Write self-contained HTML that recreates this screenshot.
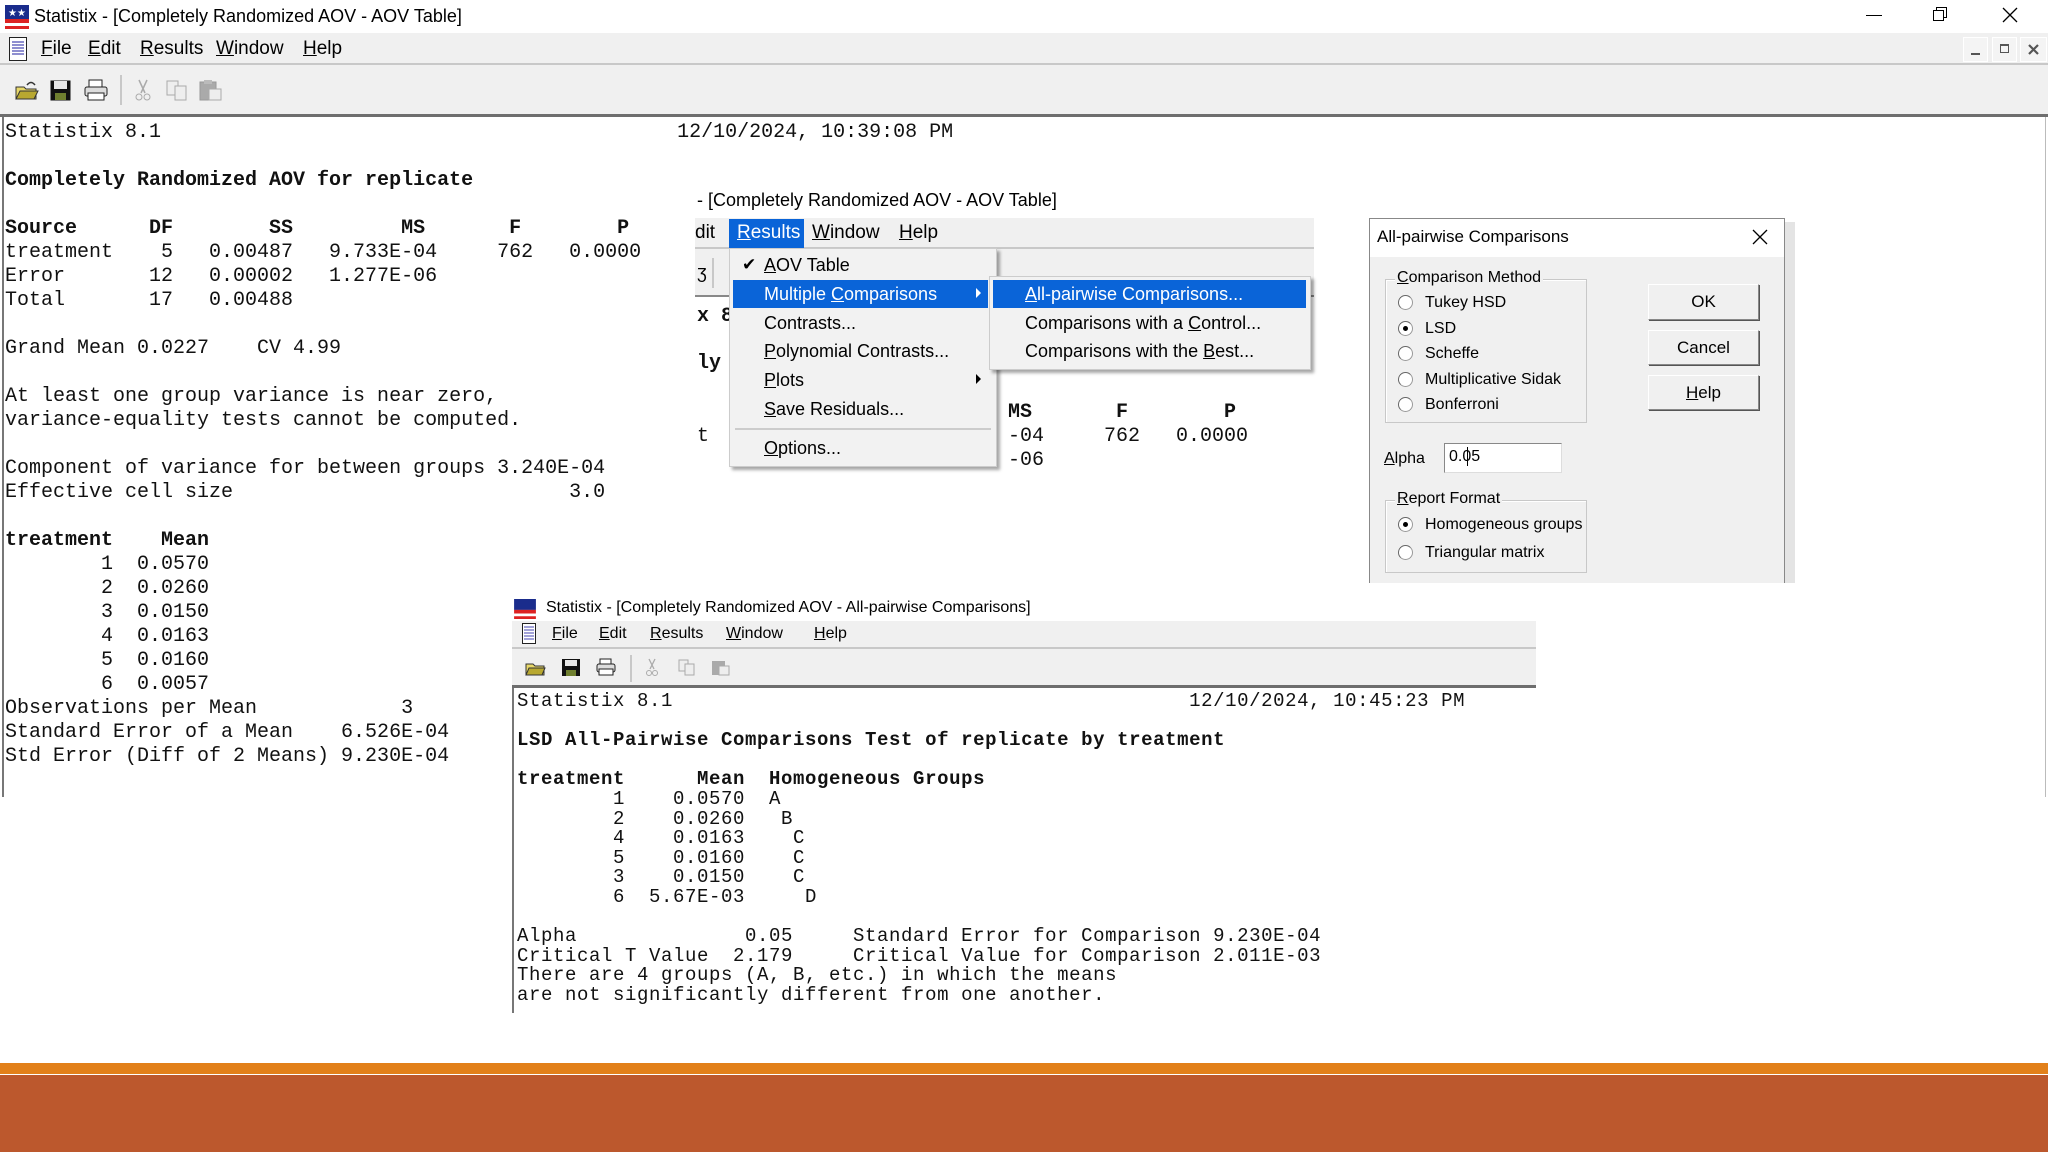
<!DOCTYPE html>
<html><head><meta charset="utf-8"><style>
*{margin:0;padding:0;box-sizing:border-box}
body{width:2048px;height:1152px;position:relative;overflow:hidden;background:#fff;font-family:"Liberation Sans",sans-serif;color:#000}
.a{position:absolute}
.mono{font-family:"Liberation Mono",monospace;white-space:pre;font-size:20px;line-height:24px;color:#111}
.ui{font-family:"Liberation Sans",sans-serif;white-space:nowrap}
b{font-weight:bold}
.gray{background:#f0f0f0}
.mi{position:absolute;font-size:18px;line-height:28px;white-space:nowrap}
.radio{position:absolute;width:15px;height:15px;border-radius:50%;border:1px solid #9a9a9a;border-left-color:#666;border-top-color:#666;background:#fff}
.radio.on::after{content:"";position:absolute;left:4px;top:4px;width:5px;height:5px;border-radius:50%;background:#000}
.rl{position:absolute;font-size:16px;line-height:20px;white-space:nowrap}
.btn{position:absolute;background:#f0f0f0;border:1px solid #fff;border-right-color:#888;border-bottom-color:#888;box-shadow:1px 1px 0 #555;font-size:17px;text-align:center}
.grp{position:absolute;border:1px solid #c8c8c8;box-shadow:1px 1px 0 #fff inset}
</style></head><body>

<svg class="a" style="left:5px;top:5px" width="24" height="24" viewBox="0 0 24 24"><rect x="0" y="0" width="24" height="14" fill="#1a2c8c"/><path d="M0 14h24v4H0z" fill="#d22"/><path d="M0 18h24v3H0z" fill="#fff"/><path d="M0 21h24v3H0z" fill="#d22"/><text x="3" y="11" font-size="10" fill="#fff" font-family="Liberation Sans">★★</text></svg>
<div class="a ui" style="left:34px;top:6px;font-size:18px">Statistix - [Completely Randomized AOV - AOV Table]</div>
<div class="a" style="left:1866px;top:15px;width:16px;height:1px;background:#000"></div>
<div class="a" style="left:1936px;top:7px;width:11px;height:11px;border:1px solid #000"></div>
<div class="a" style="left:1933px;top:10px;width:11px;height:11px;border:1px solid #000;background:#fff"></div>
<svg class="a" style="left:2002px;top:7px" width="16" height="16"><path d="M1 1L15 15M15 1L1 15" stroke="#000" stroke-width="1.3"/></svg>

<div class="a gray" style="left:0;top:33px;width:2048px;height:31px"></div>
<div class="a" style="left:0;top:63px;width:2048px;height:2px;background:#c8c8c8"></div>
<svg class="a" style="left:9px;top:37px" width="18" height="24"><rect x="0.5" y="0.5" width="17" height="23" fill="#fff" stroke="#222"/><path d="M3 5h12M3 8h12M3 11h12M3 14h12M3 17h12" stroke="#6a6ac0" stroke-width="1.5"/></svg>
<div class="a ui" style="left:41px;top:38px;font-size:19px"><u>F</u>ile</div>
<div class="a ui" style="left:88px;top:38px;font-size:19px"><u>E</u>dit</div>
<div class="a ui" style="left:140px;top:38px;font-size:19px"><u>R</u>esults</div>
<div class="a ui" style="left:216px;top:38px;font-size:19px"><u>W</u>indow</div>
<div class="a ui" style="left:303px;top:38px;font-size:19px"><u>H</u>elp</div>
<div class="a" style="left:1963px;top:37px;width:25px;height:25px;border:1px solid #fff;background:#f4f4f4"></div>
<div class="a" style="left:1971px;top:53px;width:9px;height:2px;background:#555"></div>
<div class="a" style="left:1992px;top:37px;width:25px;height:25px;border:1px solid #fff;background:#f4f4f4"></div>
<div class="a" style="left:2000px;top:44px;width:9px;height:9px;border:1px solid #555;border-top-width:2px"></div>
<div class="a" style="left:2020px;top:37px;width:27px;height:25px;border:1px solid #fff;background:#f4f4f4"></div>
<svg class="a" style="left:2028px;top:44px" width="11" height="11"><path d="M1 1L10 10M10 1L1 10" stroke="#555" stroke-width="2.2"/></svg>

<div class="a gray" style="left:0;top:65px;width:2048px;height:49px"></div>
<svg class="a" style="left:15px;top:79px" width="24" height="22"><path d="M1 8h8l2 2h10v10H1z" fill="#e8d86a" stroke="#333"/><path d="M1 20l4-8h18l-4 8z" fill="#b8a830" stroke="#333"/><path d="M12 6q4-5 8 0" fill="none" stroke="#333" stroke-width="1.5"/></svg>
<svg class="a" style="left:50px;top:80px" width="21" height="21"><rect x="0.5" y="0.5" width="20" height="20" fill="#111"/><rect x="4" y="1" width="13" height="8" fill="#e8e8e8"/><rect x="5" y="13" width="11" height="7" fill="#6f7f2f"/></svg>
<svg class="a" style="left:84px;top:79px" width="24" height="22"><rect x="5" y="1" width="13" height="8" fill="#fff" stroke="#222"/><rect x="1" y="8" width="22" height="9" rx="2" fill="#ddd" stroke="#222"/><rect x="4" y="14" width="16" height="7" fill="#fff" stroke="#222"/></svg>
<div class="a" style="left:120px;top:75px;width:2px;height:30px;background:#c8c8c8"></div>
<svg class="a" style="left:134px;top:79px" width="18" height="22"><path d="M5 1L11 14M13 1L7 14" stroke="#aaa" stroke-width="1.5"/><circle cx="5" cy="18" r="3" fill="none" stroke="#aaa"/><circle cx="13" cy="18" r="3" fill="none" stroke="#aaa"/></svg>
<svg class="a" style="left:166px;top:80px" width="22" height="21"><rect x="1" y="1" width="11" height="14" fill="#eee" stroke="#aaa"/><rect x="9" y="6" width="11" height="14" fill="#eee" stroke="#aaa"/></svg>
<svg class="a" style="left:199px;top:79px" width="24" height="22"><rect x="1" y="3" width="16" height="18" fill="#aaa" stroke="#999"/><rect x="5" y="1" width="8" height="4" fill="#bbb"/><rect x="10" y="10" width="12" height="11" fill="#eee" stroke="#aaa"/></svg>
<div class="a" style="left:0;top:114px;width:2048px;height:3px;background:#6e6e6e"></div>
<div class="a" style="left:2045px;top:117px;width:1px;height:680px;background:#bbb"></div>
<div class="a" style="left:2px;top:117px;width:2px;height:680px;background:#777"></div>

<div class="a mono" style="left:5px;top:121px">Statistix 8.1                                           12/10/2024, 10:39:08 PM

<b>Completely Randomized AOV for replicate</b>

<b>Source      DF        SS         MS       F        P</b>
treatment    5   0.00487   9.733E-04     762   0.0000
Error       12   0.00002   1.277E-06
Total       17   0.00488

Grand Mean 0.0227    CV 4.99

At least one group variance is near zero,
variance-equality tests cannot be computed.

Component of variance for between groups 3.240E-04
Effective cell size                            3.0

<b>treatment    Mean</b>
        1  0.0570
        2  0.0260
        3  0.0150
        4  0.0163
        5  0.0160
        6  0.0057
Observations per Mean            3
Standard Error of a Mean    6.526E-04
Std Error (Diff of 2 Means) 9.230E-04</div>

<div class="a" style="left:695px;top:186px;width:620px;height:290px;background:#fff"></div>
<div class="a ui" style="left:697px;top:190px;font-size:18px">- [Completely Randomized AOV - AOV Table]</div>
<div class="a gray" style="left:695px;top:218px;width:619px;height:30px"></div>
<div class="a" style="left:695px;top:247px;width:619px;height:2px;background:#c8c8c8"></div>
<div class="a gray" style="left:695px;top:249px;width:619px;height:46px"></div>
<div class="a" style="left:695px;top:295px;width:619px;height:2px;background:#888"></div>
<div class="a ui" style="left:695px;top:222px;font-size:19px">dit</div>
<div class="a" style="left:729px;top:219px;width:75px;height:29px;background:#0a64d8"></div>
<div class="a ui" style="left:737px;top:222px;font-size:19px;color:#fff"><u>R</u>esults</div>
<div class="a ui" style="left:812px;top:222px;font-size:19px"><u>W</u>indow</div>
<div class="a ui" style="left:899px;top:222px;font-size:19px"><u>H</u>elp</div>
<div class="a ui" style="left:697px;top:262px;font-size:18px">ʒ</div>
<div class="a" style="left:712px;top:258px;width:2px;height:30px;background:#c8c8c8"></div>
<div class="a mono" style="left:697px;top:305px;font-weight:bold">x 8</div>
<div class="a mono" style="left:697px;top:352px;font-weight:bold">ly</div>
<div class="a mono" style="left:697px;top:425px">t</div>
<div class="a mono" style="left:1008px;top:401px"><b>MS       F        P</b>
-04     762   0.0000
-06</div>

<div class="a" style="left:729px;top:248px;width:268px;height:219px;background:#f2f2f2;border:1px solid #ccc;box-shadow:3px 3px 3px rgba(0,0,0,.35)"></div>
<div class="mi" style="left:742px;top:251px;font-size:17px">✔</div>
<div class="mi" style="left:764px;top:251px"><u>A</u>OV Table</div>
<div class="a" style="left:733px;top:280px;width:255px;height:28px;background:#0a64d8"></div>
<div class="mi" style="left:764px;top:280px;color:#fff">Multiple <u>C</u>omparisons</div>
<div class="a" style="left:976px;top:288px;width:0;height:0;border-left:5px solid #fff;border-top:5px solid transparent;border-bottom:5px solid transparent"></div>
<div class="mi" style="left:764px;top:309px">Contrasts...</div>
<div class="mi" style="left:764px;top:337px"><u>P</u>olynomial Contrasts...</div>
<div class="mi" style="left:764px;top:366px"><u>P</u>lots</div>
<div class="a" style="left:976px;top:374px;width:0;height:0;border-left:5px solid #000;border-top:5px solid transparent;border-bottom:5px solid transparent"></div>
<div class="mi" style="left:764px;top:395px"><u>S</u>ave Residuals...</div>
<div class="a" style="left:735px;top:428px;width:256px;height:2px;background:#ccc"></div>
<div class="mi" style="left:764px;top:434px"><u>O</u>ptions...</div>

<div class="a" style="left:989px;top:276px;width:322px;height:94px;background:#f2f2f2;border:1px solid #ccc;box-shadow:3px 3px 3px rgba(0,0,0,.35)"></div>
<div class="a" style="left:993px;top:280px;width:313px;height:28px;background:#0a64d8"></div>
<div class="mi" style="left:1025px;top:280px;color:#fff"><u>A</u>ll-pairwise Comparisons...</div>
<div class="mi" style="left:1025px;top:309px">Comparisons with a <u>C</u>ontrol...</div>
<div class="mi" style="left:1025px;top:337px">Comparisons with the <u>B</u>est...</div>

<div class="a" style="left:1369px;top:218px;width:416px;height:365px;background:#f0f0f0;border:1px solid #888;border-bottom:none"></div>
<div class="a" style="left:1785px;top:222px;width:10px;height:361px;background:#e4e4e4"></div>
<div class="a" style="left:1370px;top:219px;width:414px;height:38px;background:#fff"></div>
<div class="a ui" style="left:1377px;top:227px;font-size:17px">All-pairwise Comparisons</div>
<svg class="a" style="left:1752px;top:229px" width="16" height="16"><path d="M1 1L15 15M15 1L1 15" stroke="#000" stroke-width="1.3"/></svg>
<div class="grp" style="left:1385px;top:279px;width:202px;height:144px"></div>
<div class="a ui gray" style="left:1395px;top:269px;font-size:16px;padding:0 2px"><u>C</u>omparison Method</div>
<div class="radio" style="left:1398px;top:295px"></div><div class="rl" style="left:1425px;top:293px">Tukey HSD</div>
<div class="radio on" style="left:1398px;top:321px"></div><div class="rl" style="left:1425px;top:319px">LSD</div>
<div class="radio" style="left:1398px;top:346px"></div><div class="rl" style="left:1425px;top:344px">Scheffe</div>
<div class="radio" style="left:1398px;top:372px"></div><div class="rl" style="left:1425px;top:370px">Multiplicative Sidak</div>
<div class="radio" style="left:1398px;top:397px"></div><div class="rl" style="left:1425px;top:395px">Bonferroni</div>
<div class="btn" style="left:1648px;top:284px;width:111px;height:36px;line-height:34px">OK</div>
<div class="btn" style="left:1648px;top:330px;width:111px;height:35px;line-height:33px">Cancel</div>
<div class="btn" style="left:1648px;top:375px;width:111px;height:35px;line-height:33px"><u>H</u>elp</div>
<div class="rl" style="left:1384px;top:449px"><u>A</u>lpha</div>
<div class="a" style="left:1444px;top:443px;width:118px;height:30px;background:#fff;border:1px solid #888;border-right-color:#ddd;border-bottom-color:#ddd"></div>
<div class="rl" style="left:1449px;top:447px">0.05</div>
<div class="a" style="left:1467px;top:447px;width:1px;height:19px;background:#000"></div>
<div class="grp" style="left:1385px;top:500px;width:202px;height:73px"></div>
<div class="a ui gray" style="left:1395px;top:490px;font-size:16px;padding:0 2px"><u>R</u>eport Format</div>
<div class="radio on" style="left:1398px;top:517px"></div><div class="rl" style="left:1425px;top:515px">Homogeneous groups</div>
<div class="radio" style="left:1398px;top:545px"></div><div class="rl" style="left:1425px;top:543px">Triangular matrix</div>

<div class="a" style="left:512px;top:595px;width:1024px;height:420px;background:#fff"></div>
<svg class="a" style="left:514px;top:599px" width="22" height="20" viewBox="0 0 24 22"><rect x="0" y="0" width="24" height="12" fill="#1a2c8c"/><path d="M0 12h24v4H0z" fill="#d22"/><path d="M0 16h24v3H0z" fill="#fff"/><path d="M0 19h24v3H0z" fill="#d22"/></svg>
<div class="a ui" style="left:546px;top:599px;font-size:16px">Statistix - [Completely Randomized AOV - All-pairwise Comparisons]</div>
<div class="a gray" style="left:512px;top:621px;width:1024px;height:26px"></div>
<div class="a" style="left:512px;top:647px;width:1024px;height:2px;background:#c8c8c8"></div>
<svg class="a" style="left:522px;top:623px" width="14" height="21"><rect x="0.5" y="0.5" width="13" height="20" fill="#fff" stroke="#222"/><path d="M2 4h10M2 7h10M2 10h10M2 13h10M2 16h10" stroke="#6a6ac0" stroke-width="1.3"/></svg>
<div class="a ui" style="left:552px;top:625px;font-size:16px"><u>F</u>ile</div>
<div class="a ui" style="left:599px;top:625px;font-size:16px"><u>E</u>dit</div>
<div class="a ui" style="left:650px;top:625px;font-size:16px"><u>R</u>esults</div>
<div class="a ui" style="left:726px;top:625px;font-size:16px"><u>W</u>indow</div>
<div class="a ui" style="left:814px;top:625px;font-size:16px"><u>H</u>elp</div>
<div class="a gray" style="left:512px;top:649px;width:1024px;height:37px"></div>
<svg class="a" style="left:525px;top:658px" width="22" height="18"><path d="M1 6h7l2 2h9v9H1z" fill="#e8d86a" stroke="#333"/><path d="M1 17l3-7h16l-3 7z" fill="#b8a830" stroke="#333"/></svg>
<svg class="a" style="left:562px;top:659px" width="18" height="17"><rect width="18" height="17" fill="#111"/><rect x="3" y="1" width="12" height="6" fill="#e8e8e8"/><rect x="4" y="11" width="10" height="6" fill="#6f7f2f"/></svg>
<svg class="a" style="left:596px;top:658px" width="20" height="18"><rect x="4" y="1" width="11" height="6" fill="#fff" stroke="#222"/><rect x="1" y="6" width="18" height="8" rx="2" fill="#ddd" stroke="#222"/><rect x="3" y="11" width="14" height="6" fill="#fff" stroke="#222"/></svg>
<div class="a" style="left:630px;top:655px;width:2px;height:27px;background:#c8c8c8"></div>
<svg class="a" style="left:645px;top:658px" width="14" height="18"><path d="M4 1L9 11M10 1L5 11" stroke="#aaa" stroke-width="1.3"/><circle cx="4" cy="15" r="2.5" fill="none" stroke="#aaa"/><circle cx="10" cy="15" r="2.5" fill="none" stroke="#aaa"/></svg>
<svg class="a" style="left:678px;top:659px" width="18" height="17"><rect x="1" y="1" width="9" height="11" fill="#eee" stroke="#aaa"/><rect x="7" y="5" width="9" height="11" fill="#eee" stroke="#aaa"/></svg>
<svg class="a" style="left:711px;top:658px" width="20" height="18"><rect x="1" y="3" width="13" height="14" fill="#aaa"/><rect x="8" y="8" width="10" height="9" fill="#eee" stroke="#aaa"/></svg>
<div class="a" style="left:512px;top:685px;width:1024px;height:3px;background:#6e6e6e"></div>
<div class="a" style="left:512px;top:688px;width:2px;height:325px;background:#777"></div>
<div class="a mono" style="left:517px;top:692px;font-size:19px;letter-spacing:.6px;line-height:19.6px">Statistix 8.1                                           12/10/2024, 10:45:23 PM

<b>LSD All-Pairwise Comparisons Test of replicate by treatment</b>

<b>treatment      Mean  Homogeneous Groups</b>
        1    0.0570  A
        2    0.0260   B
        4    0.0163    C
        5    0.0160    C
        3    0.0150    C
        6  5.67E-03     D

Alpha              0.05     Standard Error for Comparison 9.230E-04
Critical T Value  2.179     Critical Value for Comparison 2.011E-03
There are 4 groups (A, B, etc.) in which the means
are not significantly different from one another.</div>

<div class="a" style="left:0;top:1063px;width:2048px;height:11px;background:#e2801a"></div>
<div class="a" style="left:0;top:1075px;width:2048px;height:77px;background:#bc582d"></div>
</body></html>
